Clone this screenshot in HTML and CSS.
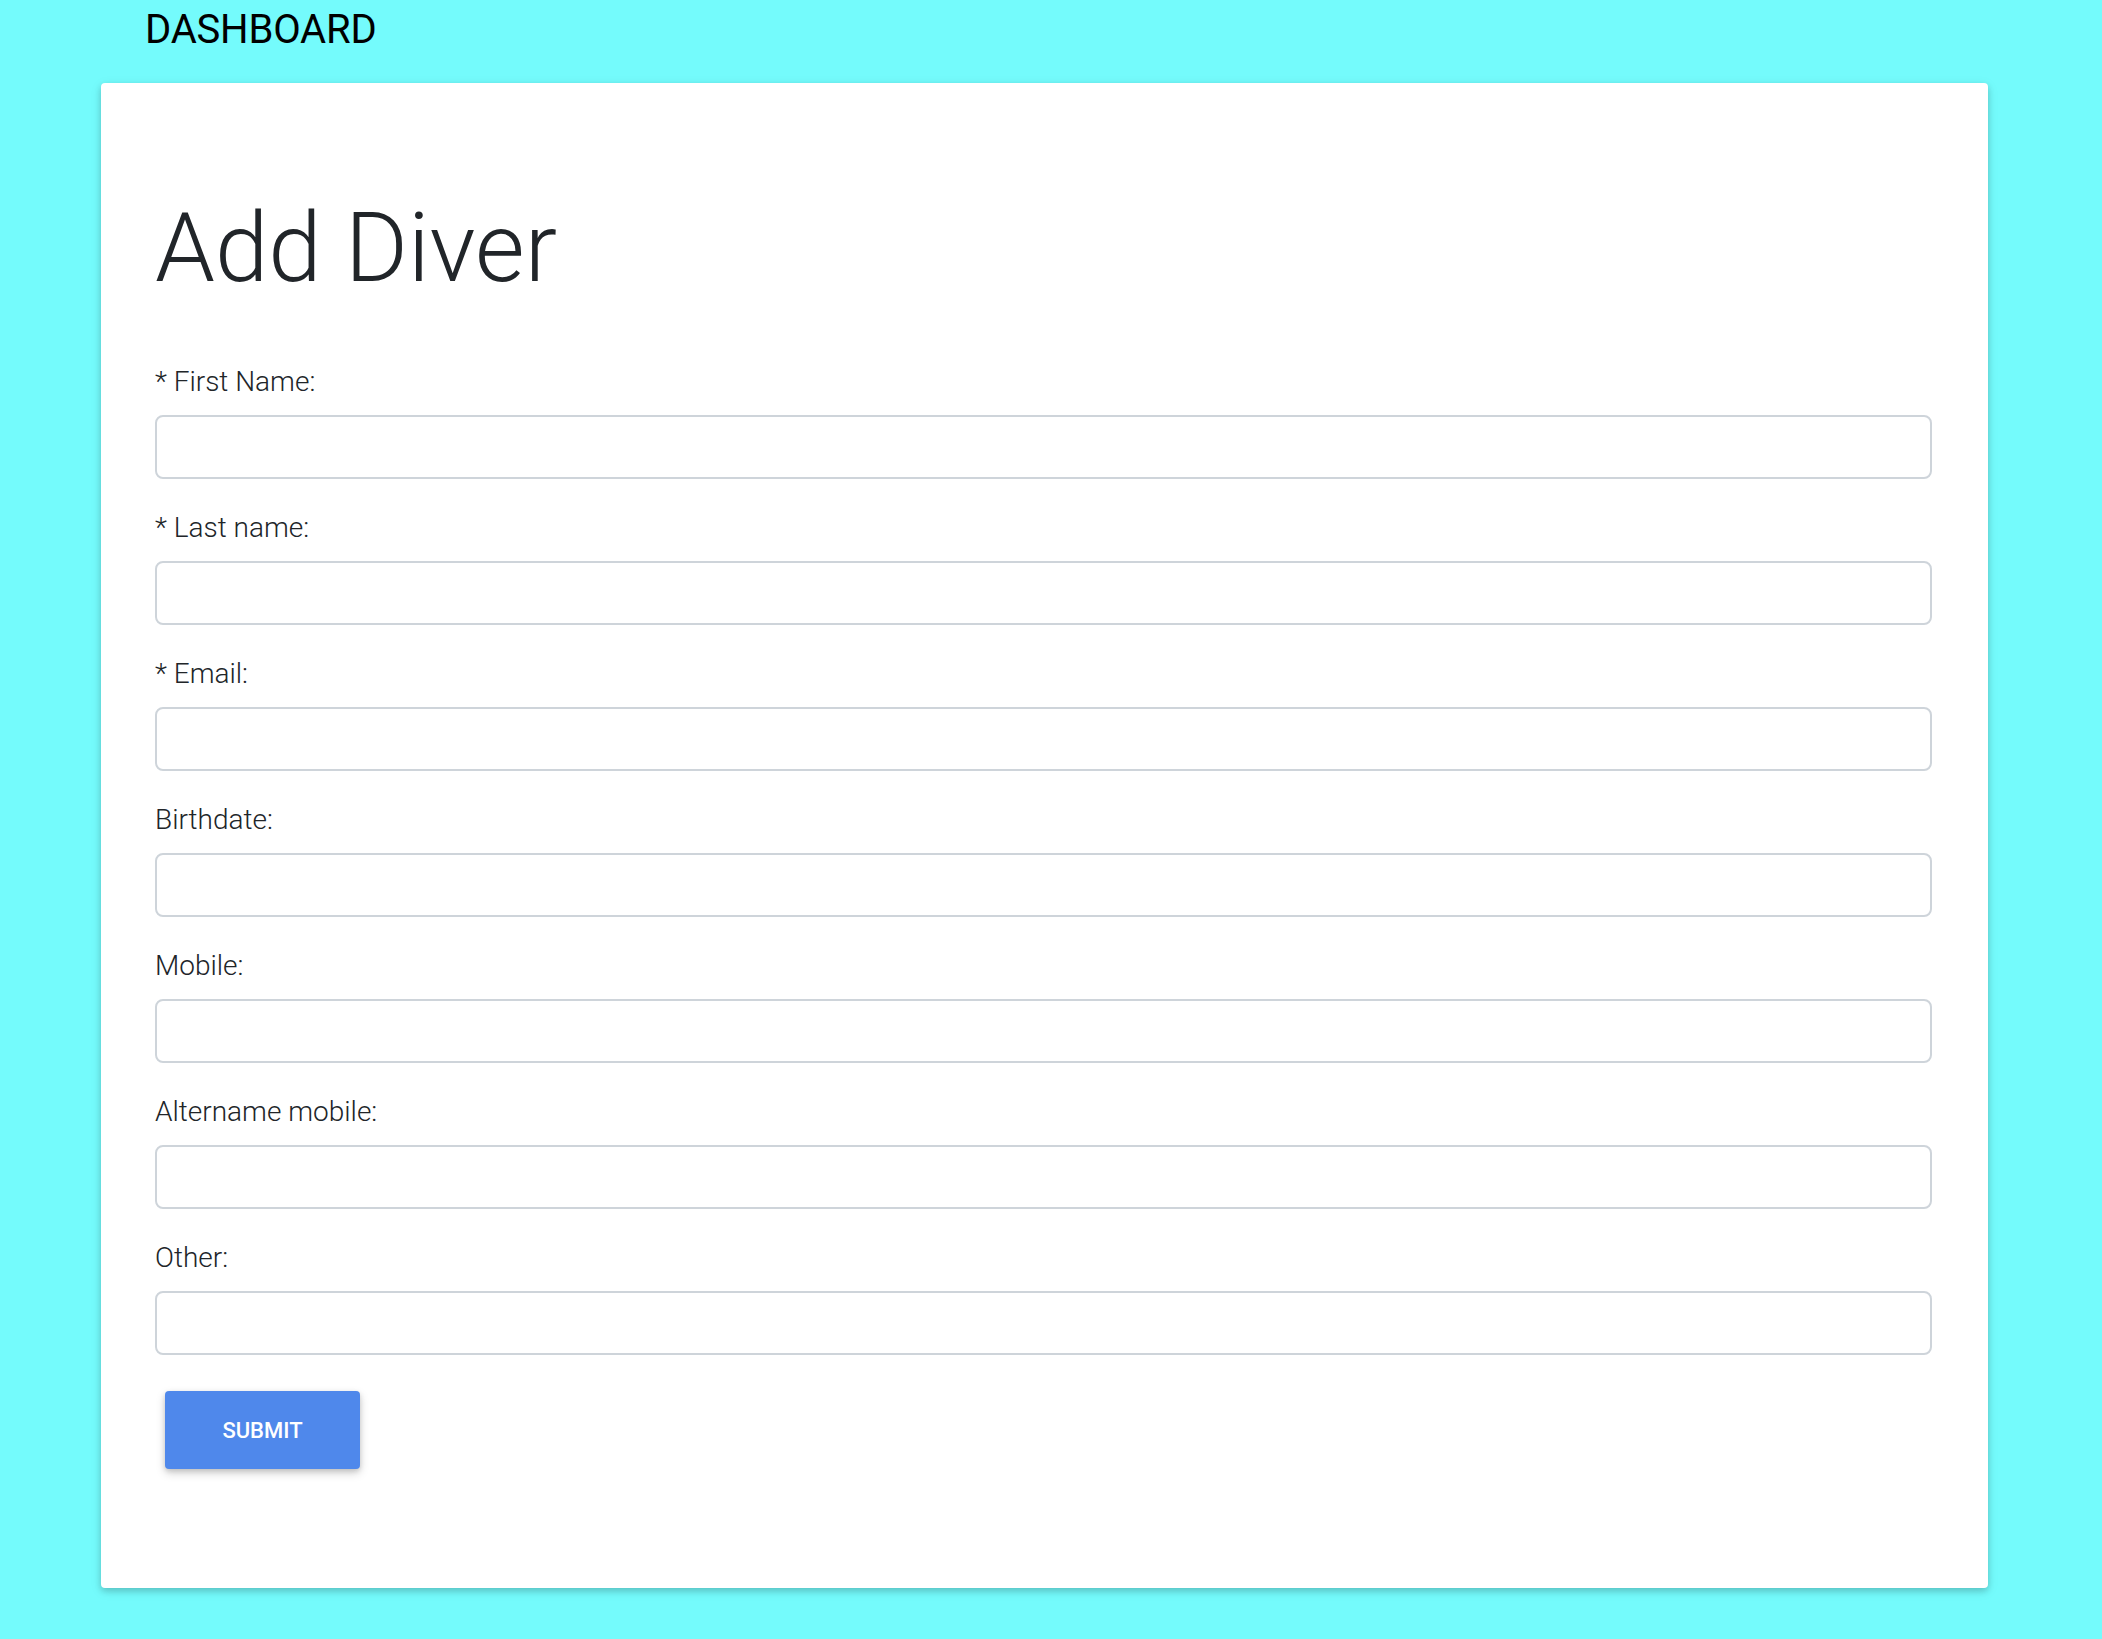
FILE: index.html
```html
<!DOCTYPE html>
<html lang="en">
<head>
<meta charset="utf-8">
<title>Add Diver</title>
<link rel="stylesheet" href="styles.css">
</head>
<body>
<header class="topbar"><span class="brand">DASHBOARD</span></header>
<main class="card">
  <h1 class="title">Add Diver</h1>
  <form class="form">
    <div class="field"><label class="label">* First Name:</label><input class="input" type="text"></div>
    <div class="field"><label class="label">* Last name:</label><input class="input" type="text"></div>
    <div class="field"><label class="label">* Email:</label><input class="input" type="text"></div>
    <div class="field"><label class="label">Birthdate:</label><input class="input" type="text"></div>
    <div class="field"><label class="label">Mobile:</label><input class="input" type="text"></div>
    <div class="field"><label class="label">Altername mobile:</label><input class="input" type="text"></div>
    <div class="field"><label class="label">Other:</label><input class="input" type="text"></div>
    <button class="submit" type="button">SUBMIT</button>
  </form>
</main>
</body>
</html>
```
FILE: styles.css
```css
html, body {
  margin: 0;
  padding: 0;
}
body {
  background: #74fbfc;
  font-family: Roboto, "Liberation Sans", Arial, sans-serif;
  min-height: 1639px;
  box-sizing: border-box;
  padding-bottom: 50px;
}
.topbar {
  height: 60px;
  padding-left: 145px;
  margin-bottom: 23px;
  font-size: 40px;
  line-height: 60px;
  color: #000;
  letter-spacing: -0.2px;
}
.card {
  margin-left: 101px;
  width: 1887px;
  box-sizing: border-box;
  padding: 108px 56px 119px 54px;
  background: #fff;
  border-radius: 4px;
  box-shadow: 0 3px 6px rgba(0, 0, 0, 0.16), 0 3px 12px rgba(0, 0, 0, 0.10);
}
.title {
  margin: 0 0 54px;
  font-size: 96px;
  font-weight: 300;
  line-height: 1.2;
  color: #212529;
}
.form {
  display: flex;
  flex-direction: column;
  align-items: stretch;
}
.field {
  margin-bottom: 27px;
}
.label {
  display: block;
  font-size: 28px;
  line-height: 42px;
  font-weight: 300;
  color: #212529;
  margin-top: 1px;
  margin-bottom: 12px;
}
.input {
  display: block;
  width: 100%;
  height: 64px;
  box-sizing: border-box;
  border: 2px solid #ced4da;
  border-radius: 8px;
  background: #fff;
  margin: 0;
  padding: 0 24px;
  font: inherit;
}
.submit {
  align-self: flex-start;
  margin: 9px 0 0 10px;
  width: 195px;
  height: 78px;
  border: none;
  border-radius: 4px;
  background: #4f88eb;
  color: #fff;
  font-family: Roboto, "Liberation Sans", Arial, sans-serif;
  font-size: 22px;
  font-weight: 500;
  box-shadow: 0 4px 10px rgba(0, 0, 0, 0.18), 0 2px 5px rgba(0, 0, 0, 0.12);
  padding: 0;
}
```
